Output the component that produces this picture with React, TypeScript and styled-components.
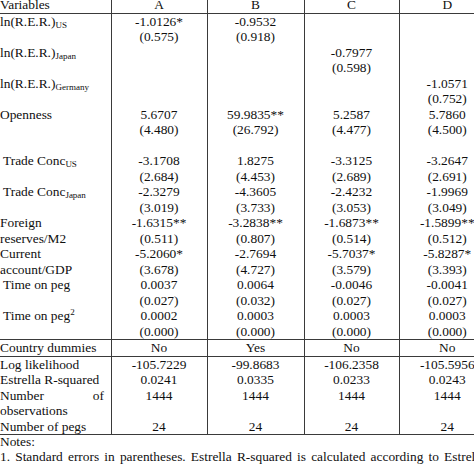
import React from 'react'
import styled, { createGlobalStyle } from 'styled-components'

const GlobalStyle = createGlobalStyle`
  html, body {
    margin: 0;
    padding: 0;
    background: #fff;
    overflow: hidden;
  }
  body {
    font-family: "Liberation Serif", "Times New Roman", serif;
    font-size: 13.4px;
    line-height: 15.5px;
    color: #0f0f0f;
  }
`

const RULE = '1px solid #3a3a3a'

const Page = styled.div`
  margin-top: -3px;
`

const Table = styled.table`
  border-collapse: collapse;
  table-layout: fixed;
  width: 495px;
`

const Col = styled.col<{ $w: number }>`
  width: ${ (p) => p.$w }px;
`

const Row = styled.tr<{ $above?: boolean; $below?: boolean }>`
  border-top: ${ (p) => (p.$above ? RULE : 'none') };
  border-bottom: ${ (p) => (p.$below ? RULE : 'none') };
`

const HeadCell = styled.th<{ $first?: boolean }>`
  padding: 0;
  font-weight: normal;
  text-align: ${ (p) => (p.$first ? 'left' : 'center') };
  border-left: ${ (p) => (p.$first ? 'none' : RULE) };
  white-space: nowrap;
  overflow: hidden;
`

const LabelCell = styled.td<{ $indent?: boolean }>`
  padding: 0 6.5px 0 ${ (p) => (p.$indent ? 3 : 0) }px;
  text-align: justify;
  vertical-align: top;
`

const ValueCell = styled.td`
  padding: 0;
  text-align: center;
  vertical-align: top;
  border-left: ${ RULE };
  white-space: nowrap;
`

const Line = styled.span`
  display: block;
`

const Sub = styled.sub`
  font-size: 9px;
  line-height: 0;
  vertical-align: -2px;
`

const Sup = styled.sup`
  font-size: 9px;
  line-height: 0;
  vertical-align: 5px;
`

const Notes = styled.div`
  white-space: nowrap;
  line-height: 14.5px;
  word-spacing: 1.8px;
`

type Cell = [string, string] | string | null

interface Variable {
  label: React.ReactNode
  indent?: boolean
  values: Cell[]
  gapAfter?: boolean
}

const rer = (country: string) => <>ln(R.E.R.)<Sub>{country}</Sub></>
const conc = (country: string) => <>Trade Conc<Sub>{country}</Sub></>

const variables: Variable[] = [
	{ label: rer('US'), values: [ [ '-1.0126*', '(0.575)' ], [ '-0.9532', '(0.918)' ], null, null ] },
	{ label: rer('Japan'), values: [ null, null, [ '-0.7977', '(0.598)' ], null ] },
	{ label: rer('Germany'), values: [ null, null, null, [ '-1.0571', '(0.752)' ] ] },
	{
		label: 'Openness',
		values: [ [ '5.6707', '(4.480)' ], [ '59.9835**', '(26.792)' ], [ '5.2587', '(4.477)' ], [ '5.7860', '(4.500)' ] ],
		gapAfter: true
	},
	{
		label: conc('US'),
		indent: true,
		values: [ [ '-3.1708', '(2.684)' ], [ '1.8275', '(4.453)' ], [ '-3.3125', '(2.689)' ], [ '-3.2647', '(2.691)' ] ]
	},
	{
		label: conc('Japan'),
		indent: true,
		values: [ [ '-2.3279', '(3.019)' ], [ '-4.3605', '(3.733)' ], [ '-2.4232', '(3.053)' ], [ '-1.9969', '(3.049)' ] ]
	},
	{
		label: 'Foreign reserves/M2',
		values: [ [ '-1.6315**', '(0.511)' ], [ '-3.2838**', '(0.807)' ], [ '-1.6873**', '(0.514)' ], [ '-1.5899**', '(0.512)' ] ]
	},
	{
		label: 'Current account/GDP',
		values: [ [ '-5.2060*', '(3.678)' ], [ '-2.7694', '(4.727)' ], [ '-5.7037*', '(3.579)' ], [ '-5.8287*', '(3.393)' ] ]
	},
	{
		label: 'Time on peg',
		indent: true,
		values: [ [ '0.0037', '(0.027)' ], [ '0.0064', '(0.032)' ], [ '-0.0046', '(0.027)' ], [ '-0.0041', '(0.027)' ] ]
	},
	{
		label: <>Time on peg<Sup>2</Sup></>,
		indent: true,
		values: [ [ '0.0002', '(0.000)' ], [ '0.0003', '(0.000)' ], [ '0.0003', '(0.000)' ], [ '0.0003', '(0.000)' ] ]
	}
]

const summary: { label: string; values: string[] }[] = [
	{ label: 'Log likelihood', values: [ '-105.7229', '-99.8683', '-106.2358', '-105.5956' ] },
	{ label: 'Estrella R-squared', values: [ '0.0241', '0.0335', '0.0233', '0.0243' ] },
	{ label: 'Number of observations', values: [ '1444', '1444', '1444', '1444' ] }
]

const renderCell = (cell: Cell, key: number) => (
	<ValueCell key={key}>
		{Array.isArray(cell) ? (
			<>
				<Line>{cell[0]}</Line>
				<Line>{cell[1]}</Line>
			</>
		) : (
			cell ?? ''
		)}
	</ValueCell>
)

const App = (): React.ReactNode => (
	<>
		<GlobalStyle />
		<Page>
			<Table>
				<colgroup>
					<Col $w={111} />
					<Col $w={96} />
					<Col $w={97} />
					<Col $w={95} />
					<Col $w={96} />
				</colgroup>
				<thead>
					<Row $below>
						<HeadCell $first>Variables</HeadCell>
						{[ 'A', 'B', 'C', 'D' ].map((h) => (
							<HeadCell key={h}>{h}</HeadCell>
						))}
					</Row>
				</thead>
				<tbody>
					{variables.map((v, i) => (
						<React.Fragment key={i}>
							<Row>
								<LabelCell $indent={v.indent}>{v.label}</LabelCell>
								{v.values.map(renderCell)}
							</Row>
							{v.gapAfter && (
								<Row>
									<LabelCell>&nbsp;</LabelCell>
									{[ 0, 1, 2, 3 ].map((k) => renderCell('\u00a0', k))}
								</Row>
							)}
						</React.Fragment>
					))}
					<Row $above $below>
						<LabelCell>Country dummies</LabelCell>
						{[ 'No', 'Yes', 'No', 'No' ].map(renderCell)}
					</Row>
					{summary.map((s) => (
						<Row key={s.label}>
							<LabelCell>{s.label}</LabelCell>
							{s.values.map(renderCell)}
						</Row>
					))}
					<Row $below>
						<LabelCell>Number of pegs</LabelCell>
						{[ '24', '24', '24', '24' ].map(renderCell)}
					</Row>
				</tbody>
			</Table>
			<Notes>
				Notes:
				<br />
				1. Standard errors in parentheses. Estrella R-squared is calculated according to Estrella (1998).
			</Notes>
		</Page>
	</>
)

export default App
